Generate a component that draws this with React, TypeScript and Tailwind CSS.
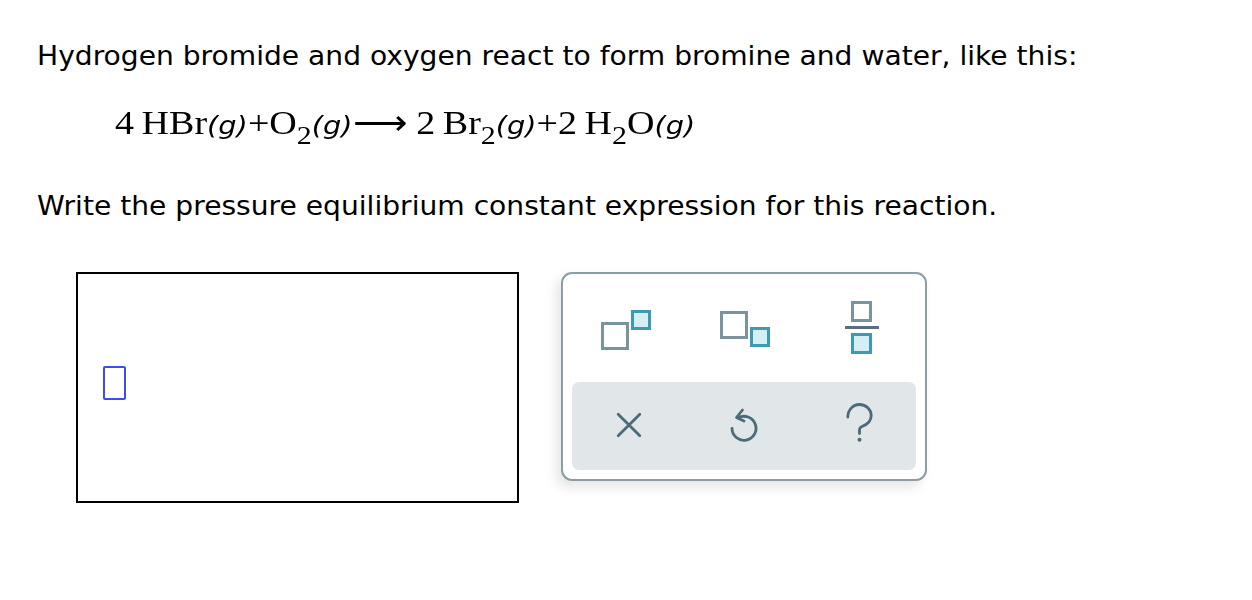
import React from "react";

const G = () => (
  <span className="italic font-['DejaVu_Sans',sans-serif] text-[25px]">(g)</span>
);

const Sub = ({ children }: { children: React.ReactNode }) => (
  <span className="relative top-[10px] text-[26px]">{children}</span>
);

export default function App() {
  return (
    <div className="w-[1252px] h-[600px] bg-white text-black relative overflow-hidden">
      <div className="pl-[37px] pt-[40px]">
        <p className="font-['DejaVu_Sans',sans-serif] text-[26px] leading-[32px] whitespace-nowrap origin-left scale-x-[1.082]">
          Hydrogen bromide and oxygen react to form bromine and water, like this:
        </p>
        <div className="pl-[78px] mt-[31px] h-[40px]">
          <div className="flex items-baseline whitespace-nowrap font-['Liberation_Serif',serif] text-[33px] leading-[40px] origin-left scale-x-[1.152]">
            <span>4&thinsp;HBr</span>
            <G />
            <span>+O</span>
            <Sub>2</Sub>
            <G />
            <span>⟶ 2&thinsp;Br</span>
            <Sub>2</Sub>
            <G />
            <span>+2&thinsp;H</span>
            <Sub>2</Sub>
            <span>O</span>
            <G />
          </div>
        </div>
        <p className="mt-[47px] font-['DejaVu_Sans',sans-serif] text-[26px] leading-[32px] whitespace-nowrap origin-left scale-x-[1.082]">
          Write the pressure equilibrium constant expression for this reaction.
        </p>
        <div className="flex mt-[50px] ml-[39px] gap-[42px]">
          <div className="w-[443px] h-[231px] border-2 border-black flex items-center pl-[25px]">
            <div className="w-[23px] h-[34px] border-2 border-[#3b4cf5] rounded-[2px] mb-[9px]" />
          </div>
          <div className="w-[366px] h-[209px] border-2 border-[#8b9ea6] rounded-[11px] bg-white shadow-[-5px_6px_12px_rgba(0,0,0,0.10)] px-[9px] pt-[9px] pb-[9px] flex flex-col">
            <div className="grid grid-cols-3 flex-1 items-center">
              <div className="flex justify-center">
                <svg width="52" height="40" viewBox="0 0 52 40" className="mt-[-6px] mr-[4px]">
                  <rect x="1.5" y="13.5" width="25" height="25" fill="none" stroke="#7a949e" strokeWidth="3" />
                  <rect x="31.5" y="1.5" width="17" height="17" fill="#d5eef3" stroke="#3d9ab3" strokeWidth="3" />
                </svg>
              </div>
              <div className="flex justify-center">
                <svg width="50" height="36" viewBox="0 0 50 36" className="mt-[-8px] ml-[2px]">
                  <rect x="1.5" y="1.5" width="25" height="25" fill="none" stroke="#7a949e" strokeWidth="3" />
                  <rect x="31.5" y="17.5" width="17" height="17" fill="#d5eef3" stroke="#3d9ab3" strokeWidth="3" />
                </svg>
              </div>
              <div className="flex justify-center">
                <svg width="34" height="54" viewBox="0 0 34 54" className="ml-[6px] mt-[-10px]">
                  <rect x="7.5" y="1.5" width="18" height="18" fill="none" stroke="#7a949e" strokeWidth="3" />
                  <rect x="0" y="25" width="34" height="3" fill="#56717c" />
                  <rect x="7.5" y="33.5" width="18" height="18" fill="#d5eef3" stroke="#3d9ab3" strokeWidth="3" />
                </svg>
              </div>
            </div>
            <div className="h-[88px] bg-[#e1e6e9] rounded-[7px] grid grid-cols-3 items-center">
              <div className="flex justify-center">
                <svg width="26" height="26" viewBox="0 0 26 26" className="mt-[-2px]">
                  <path d="M2.2 2.2 L23.8 23.8 M23.8 2.2 L2.2 23.8" stroke="#4b6b79" strokeWidth="2.8" strokeLinecap="round" fill="none" />
                </svg>
              </div>
              <div className="flex justify-center">
                <svg width="32" height="38" viewBox="0 0 32 38" className="mt-[-4px]">
                  <path d="M4 23.3 A12 12 0 1 0 10 12.9" stroke="#4b6b79" strokeWidth="2.8" strokeLinecap="round" fill="none" />
                  <path d="M14.5 5 L8.5 12.5 L16 16" stroke="#4b6b79" strokeWidth="2.8" strokeLinecap="round" strokeLinejoin="round" fill="none" />
                </svg>
              </div>
              <div className="flex justify-center">
                <svg width="28" height="42" viewBox="0 0 28 42" className="mt-[-6px]">
                  <path d="M2.8 15 C2.8 8 8 2.5 14.5 2.5 C21 2.5 26.2 7.5 26.2 13.5 C26.2 20 21 23 17 24.5 C15 25.3 14.5 26.5 14.5 28 L14.5 31.5" stroke="#4b6b79" strokeWidth="2.8" strokeLinecap="round" fill="none" />
                  <circle cx="14.5" cy="37.7" r="2" fill="#4b6b79" />
                </svg>
              </div>
            </div>
          </div>
        </div>
      </div>
    </div>
  );
}
